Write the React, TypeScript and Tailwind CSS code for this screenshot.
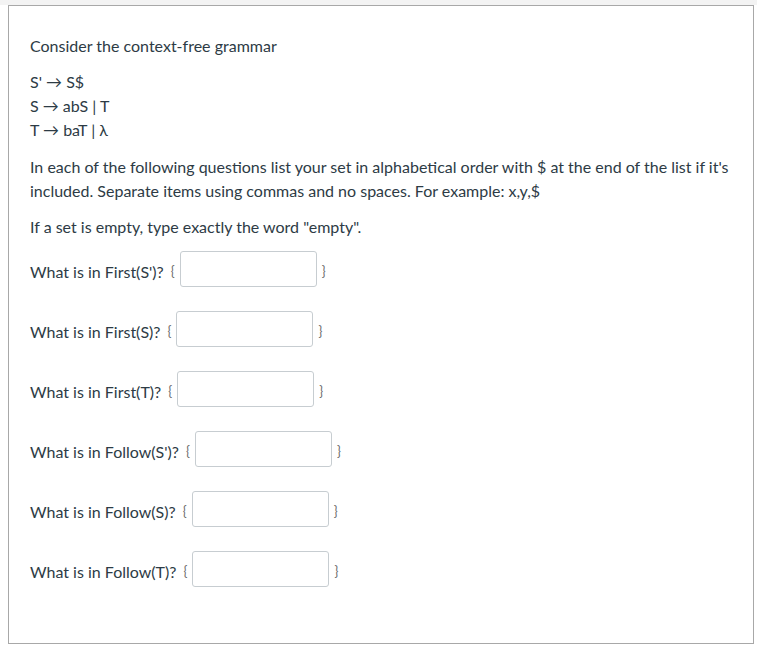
export default function App() {
  const rows = [
    "What is in First(S')?",
    "What is in First(S)?",
    "What is in First(T)?",
    "What is in Follow(S')?",
    "What is in Follow(S)?",
    "What is in Follow(T)?",
  ];

  return (
    <div className="min-h-[659px] w-[757px] bg-white font-['Lato','Liberation_Sans',sans-serif] text-[16px] text-[#2d3b45]">
      {/* top strip */}
      <div className="h-[5px] bg-[#f3f3f3]" />

      {/* question frame */}
      <div className="ml-[8px] h-[639px] w-[746px] border border-[#a8a8a8] px-[21px] pt-[28px]">
        <p className="leading-6">Consider the context-free grammar</p>

        <div className="mt-3 leading-6">
          <p>S' → S$</p>
          <p>S → abS | T</p>
          <p>T → baT | λ</p>
        </div>

        <p className="mt-[13px] leading-6">
          In each of the following questions list your set in alphabetical order with $ at the end of the list if it's
          included. Separate items using commas and no spaces. For example: x,y,$
        </p>

        <p className="mt-3 leading-6">If a set is empty, type exactly the word "empty".</p>

        <div className="mt-3 flex flex-col gap-6">
          {rows.map((label) => (
            <div key={label} className="flex h-[36px] items-center">
              <span className="pt-[5px]">{label}</span>
              <span className="ml-[7px] pt-[5px] text-[13px] text-[#6b6b6b]">{"{"}</span>
              <div className="ml-[5px] h-[36px] w-[137px] rounded-[3px] border border-[#c7cdd1] bg-white" />
              <span className="ml-[5px] pt-[5px] text-[13px] text-[#6b6b6b]">{"}"}</span>
            </div>
          ))}
        </div>
      </div>
    </div>
  );
}
